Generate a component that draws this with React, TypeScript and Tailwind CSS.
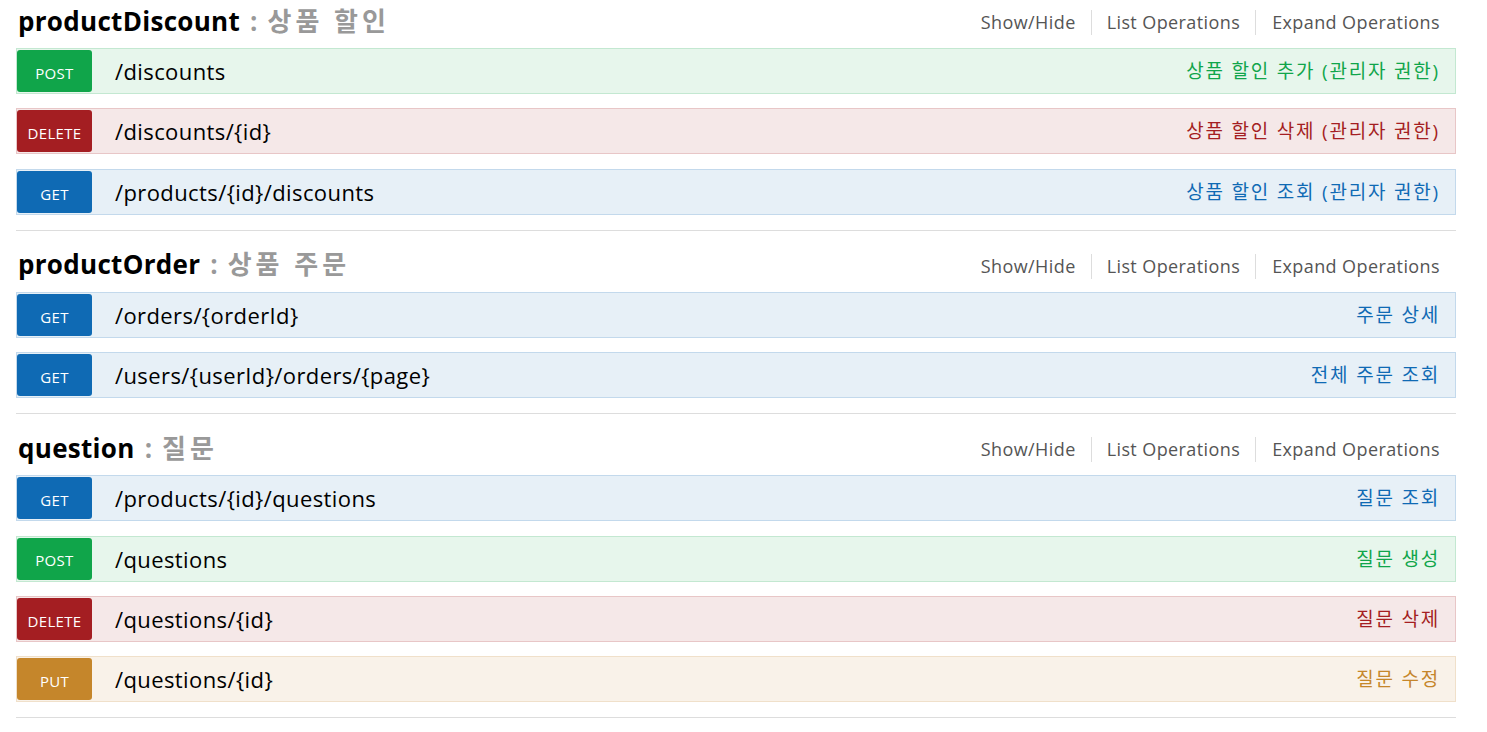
type Method = "GET" | "POST" | "DELETE" | "PUT";

type Operation = {
  method: Method;
  path: string;
  summary: string;
};

type Resource = {
  name: string;
  description: string;
  operations: Operation[];
};

const resources: Resource[] = [
  {
    name: "productDiscount",
    description: "상품 할인",
    operations: [
      { method: "POST", path: "/discounts", summary: "상품 할인 추가 (관리자 권한)" },
      { method: "DELETE", path: "/discounts/{id}", summary: "상품 할인 삭제 (관리자 권한)" },
      { method: "GET", path: "/products/{id}/discounts", summary: "상품 할인 조회 (관리자 권한)" },
    ],
  },
  {
    name: "productOrder",
    description: "상품 주문",
    operations: [
      { method: "GET", path: "/orders/{orderId}", summary: "주문 상세" },
      { method: "GET", path: "/users/{userId}/orders/{page}", summary: "전체 주문 조회" },
    ],
  },
  {
    name: "question",
    description: "질문",
    operations: [
      { method: "GET", path: "/products/{id}/questions", summary: "질문 조회" },
      { method: "POST", path: "/questions", summary: "질문 생성" },
      { method: "DELETE", path: "/questions/{id}", summary: "질문 삭제" },
      { method: "PUT", path: "/questions/{id}", summary: "질문 수정" },
    ],
  },
];

const methodStyles: Record<Method, { row: string; badge: string; text: string }> = {
  GET: {
    row: "bg-[#e7f0f7] border-[#c3d9ec]",
    badge: "bg-[#0f6ab4]",
    text: "text-[#0f6ab4]",
  },
  POST: {
    row: "bg-[#e7f6ec] border-[#c3e8d1]",
    badge: "bg-[#10a54a]",
    text: "text-[#10a54a]",
  },
  DELETE: {
    row: "bg-[#f5e8e8] border-[#e8c6c7]",
    badge: "bg-[#a41e22]",
    text: "text-[#a41e22]",
  },
  PUT: {
    row: "bg-[#f9f2e9] border-[#f0e0ca]",
    badge: "bg-[#c5862b]",
    text: "text-[#c5862b]",
  },
};

const font = "font-['Open_Sans','Noto_Sans_CJK_KR',sans-serif]";

const OperationRow = ({ op }: { op: Operation }) => {
  const s = methodStyles[op.method];
  return (
    <li className={`flex h-[46px] items-center border ${s.row}`}>
      <span
        className={`flex h-[42px] w-[75px] shrink-0 items-center justify-center rounded-[3px] pt-[4px] text-[15px] tracking-[0.3px] text-white ${s.badge}`}
      >
        {op.method}
      </span>
      <span className="ml-[23px] text-[22px] leading-none tracking-[0.4px] text-black">
        {op.path}
      </span>
      <span className={`ml-auto pr-[15px] pt-[1px] text-[19px] leading-none tracking-[1.8px] ${s.text}`}>
        {op.summary}
      </span>
    </li>
  );
};

const ResourceSection = ({ resource }: { resource: Resource }) => (
  <section className="border-b border-[#dddddd] pb-[15px]">
    <div className="flex h-[61px] items-center justify-between pt-[6px]">
      <h2 className="pl-[2px] text-[26px] font-bold leading-none">
        <span className="tracking-[0.3px] text-black">{resource.name}</span>
        <span className="mx-[10px] text-[#999999]">:</span>
        <span className="tracking-[4px] text-[#999999]">{resource.description}</span>
      </h2>
      <ul className="flex items-center pr-[16px] pt-[4px] text-[18px] tracking-[0.4px] text-[#555555]">
        <li className="pr-[15px]">Show/Hide</li>
        <li className="border-l border-[#dddddd] px-[15px] leading-[25px]">List Operations</li>
        <li className="border-l border-[#dddddd] pl-[16px] leading-[25px]">Expand Operations</li>
      </ul>
    </div>
    <ul className="flex flex-col gap-[14.4px]">
      {resource.operations.map((op) => (
        <OperationRow key={op.method + op.path} op={op} />
      ))}
    </ul>
  </section>
);

export default function App() {
  return (
    <div className={`h-[732px] w-[1487px] overflow-hidden bg-white ${font}`}>
      <div className="-mt-[13px] ml-[16px] w-[1440px]">
        {resources.map((r) => (
          <ResourceSection key={r.name} resource={r} />
        ))}
      </div>
    </div>
  );
}
